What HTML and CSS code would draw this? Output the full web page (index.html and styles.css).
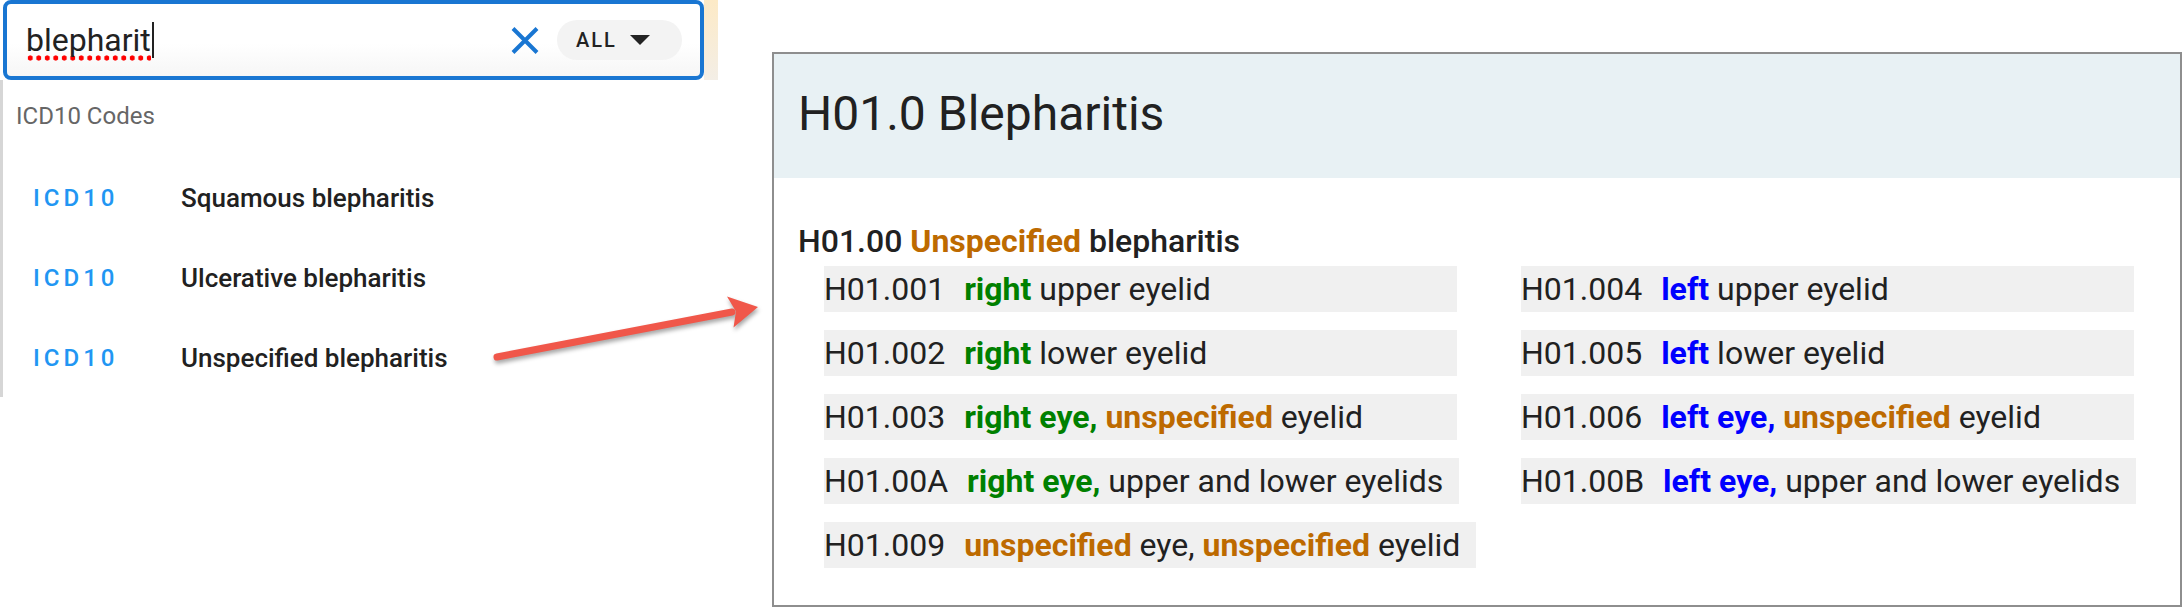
FILE: index.html
```html
<!DOCTYPE html>
<html lang="en">
<head>
<meta charset="utf-8">
<title>ICD10 search</title>
<link rel="stylesheet" href="styles.css">
</head>
<body>
<div class="page">
  <div class="left">
    <div class="search-row">
      <div class="search-box">
        <div class="query"><span class="typed">blepharit</span><span class="caret"></span></div>
        <svg class="clear" viewBox="0 0 28 27" width="28" height="27"><path d="M2 1.5 L26 25.5 M26 1.5 L2 25.5" stroke="#1976d2" stroke-width="4" fill="none"/></svg>
        <div class="scope"><span class="scope-label">ALL</span><span class="tri"></span></div>
      </div>
      <div class="beige"></div>
    </div>
    <div class="dropdown">
      <div class="group-label">ICD10 Codes</div>
      <div class="result"><span class="tag">ICD10</span><span class="name">Squamous blepharitis</span></div>
      <div class="result"><span class="tag">ICD10</span><span class="name">Ulcerative blepharitis</span></div>
      <div class="result"><span class="tag">ICD10</span><span class="name">Unspecified blepharitis</span></div>
    </div>
  </div>

  <div class="card">
    <div class="card-head"><h1 class="title">H01.0 Blepharitis</h1></div>
    <div class="card-body">
      <div class="sub">H01.00 <b class="unsp">Unspecified</b> blepharitis</div>
      <div class="codes">
        <div class="item"><span class="code">H01.001</span> <b class="rt">right</b> upper eyelid</div>
        <div class="item"><span class="code">H01.004</span> <b class="lt">left</b> upper eyelid</div>
        <div class="item"><span class="code">H01.002</span> <b class="rt">right</b> lower eyelid</div>
        <div class="item"><span class="code">H01.005</span> <b class="lt">left</b> lower eyelid</div>
        <div class="item"><span class="code">H01.003</span> <b class="rt">right eye,</b> <b class="unsp">unspecified</b> eyelid</div>
        <div class="item"><span class="code">H01.006</span> <b class="lt">left eye,</b> <b class="unsp">unspecified</b> eyelid</div>
        <div class="item"><span class="code">H01.00A</span> <b class="rt">right eye,</b> upper and lower eyelids</div>
        <div class="item"><span class="code">H01.00B</span> <b class="lt">left eye,</b> upper and lower eyelids</div>
        <div class="item"><span class="code">H01.009</span> <b class="unsp">unspecified</b> eye, <b class="unsp">unspecified</b> eyelid</div>
      </div>
    </div>
  </div>

  <svg class="arrow" viewBox="0 0 300 100" width="300" height="100">
    <line x1="17" y1="77" x2="252" y2="32" stroke="#f0574a" stroke-width="7" stroke-linecap="round"/>
    <path d="M278 27 L247 16.5 L256 31.5 L253.5 47.5 Z" fill="#f0574a"/>
  </svg>
</div>
</body>
</html>
```

FILE: styles.css
```css
* { box-sizing: border-box; }

html, body {
  margin: 0;
  padding: 0;
  background: #ffffff;
}

body {
  width: 2184px;
  height: 608px;
  overflow: hidden;
  font-family: Roboto, "Noto Sans", Arial, sans-serif;
  color: #222222;
}

.page {
  position: relative;
  display: flex;
  align-items: flex-start;
  width: 2184px;
  height: 608px;
}

/* ---------- left: search ---------- */
.left {
  flex: 0 0 772px;
  display: flex;
  flex-direction: column;
}

.search-row {
  display: flex;
  margin-left: 3px;
}

.search-box {
  width: 701px;
  height: 80px;
  border: 4px solid #1976d2;
  border-radius: 8px;
  background: linear-gradient(#ffffff 55%, #f6f6f6);
  display: flex;
  align-items: center;
  padding: 0 18px 0 19px;
}

.beige {
  width: 14px;
  height: 80px;
  background: linear-gradient(#fdeac6, #f3eee6);
}

.query {
  flex: 1;
  display: flex;
  align-items: center;
  font-size: 32px;
  line-height: 36px;
  color: #222222;
}

.typed {
  background-image: radial-gradient(circle, #ff0000 2.3px, transparent 2.9px);
  background-size: 8.5px 6px;
  background-repeat: repeat-x;
  background-position: 0 100%;
  padding-bottom: 3px;
  margin-bottom: -3px;
}

.caret {
  display: inline-block;
  width: 2px;
  height: 36px;
  background: #222222;
  margin-left: 1px;
}

.clear {
  display: block;
  margin-right: 18px;
}

.scope {
  width: 125px;
  height: 40px;
  border-radius: 20px;
  background: #f3f3f3;
  display: flex;
  align-items: center;
  padding-left: 19px;
}

.scope-label {
  font-size: 20px;
  line-height: 20px;
  font-weight: 500;
  letter-spacing: 2px;
  color: #222222;
}

.tri {
  width: 0;
  height: 0;
  margin-left: 13px;
  border-left: 10px solid transparent;
  border-right: 10px solid transparent;
  border-top: 10px solid #222222;
}

.dropdown {
  width: 720px;
  height: 317px;
  border-left: 3px solid #d6d6d6;
  padding: 20px 0 0 13px;
  background: #ffffff;
}

.group-label {
  font-size: 24px;
  line-height: 32px;
  color: #666666;
  margin-bottom: 26px;
}

.result {
  display: flex;
  align-items: center;
  height: 80px;
  padding-left: 17px;
}

.tag {
  flex: 0 0 148px;
  font-size: 24px;
  line-height: 30px;
  font-weight: 500;
  letter-spacing: 4px;
  color: #2196f3;
}

.name {
  font-size: 26px;
  line-height: 30px;
  font-weight: 500;
  color: #212121;
}

/* ---------- right: card ---------- */
.card {
  margin-top: 52px;
  width: 1410px;
  height: 555px;
  border: 2px solid #8e8e8e;
  background: #ffffff;
}

.card-head {
  height: 124px;
  background: #e8f1f4;
  padding: 32px 0 0 24px;
}

.title {
  margin: 0;
  font-size: 48px;
  line-height: 56px;
  font-weight: 400;
  color: #212121;
}

.card-body {
  padding: 44px 0 0 24px;
}

.sub {
  font-size: 32px;
  line-height: 38px;
  font-weight: 500;
  color: #212121;
}

.codes {
  margin: 6px 0 0 26px;
  display: grid;
  grid-template-columns: 633px 613px;
  column-gap: 64px;
  row-gap: 18px;
}

.item {
  justify-self: start;
  min-width: 100%;
  height: 46px;
  line-height: 46px;
  font-size: 32px;
  font-weight: 400;
  white-space: nowrap;
  background: #f0f0f0;
  padding-right: 16px;
  color: #212121;
}

.code {
  margin-right: 11px;
}

.item b, .sub b {
  font-weight: 700;
}

.rt { color: #008000; }
.lt { color: #0000ff; }
.unsp { color: #bd6a00; }

/* ---------- annotation arrow ---------- */
.arrow {
  position: absolute;
  left: 480px;
  top: 280px;
  overflow: visible;
  filter: drop-shadow(1px 3px 2px rgba(0, 0, 0, 0.35));
}
```
